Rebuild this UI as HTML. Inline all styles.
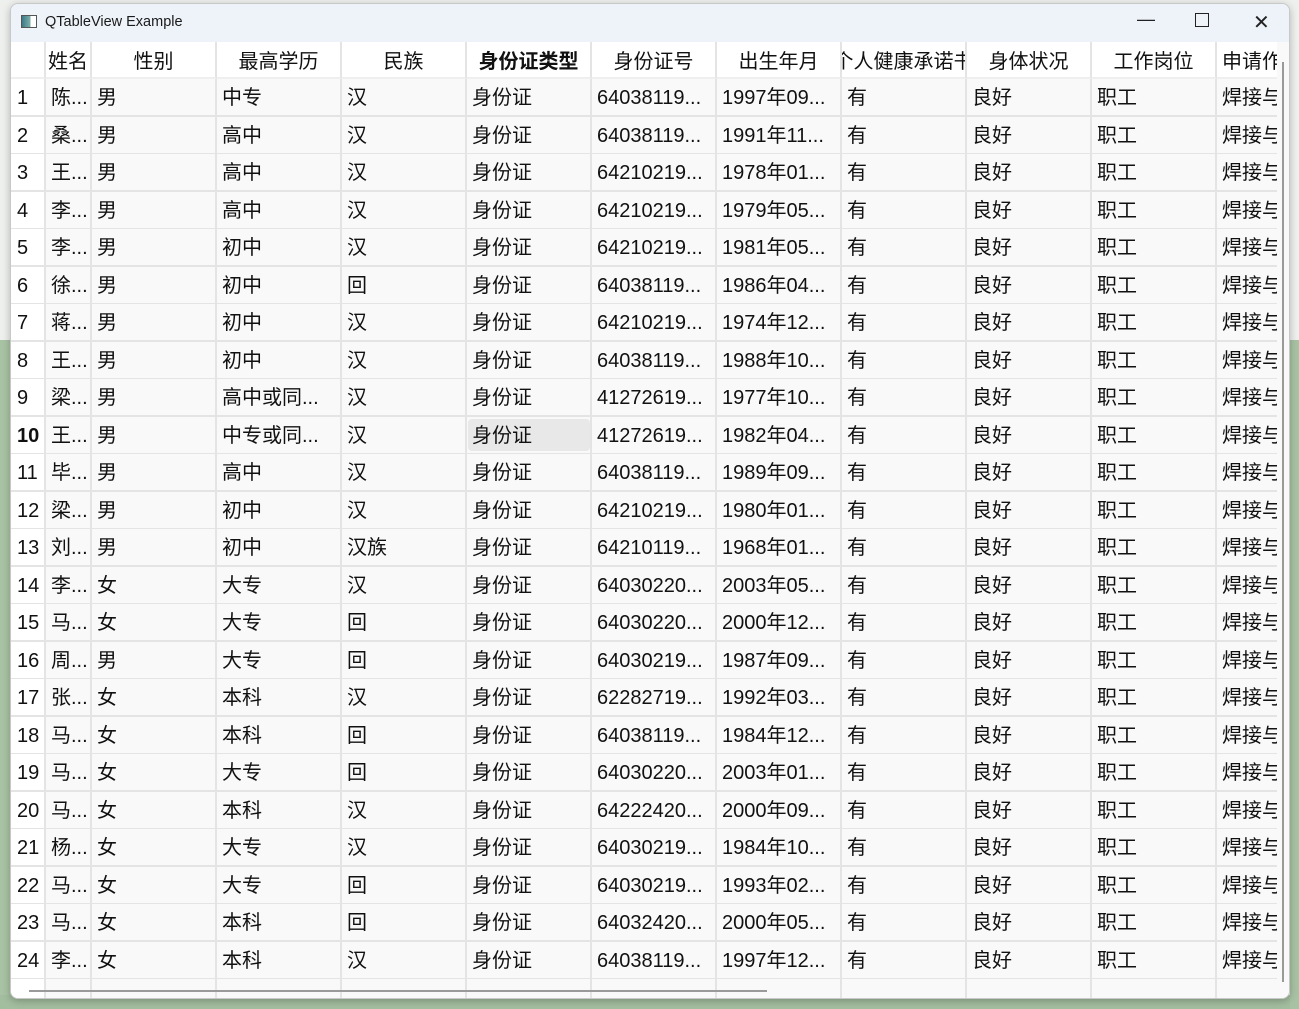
<!DOCTYPE html>
<html><head><meta charset="utf-8">
<style>
html,body{margin:0;padding:0;width:1299px;height:1009px;overflow:hidden;background:#eef0ee;font-family:"Liberation Sans","Noto Sans CJK SC",sans-serif;}
.bgl{position:absolute;left:0;top:340px;width:12px;height:669px;background:#a9c2a4;}
.bgb{position:absolute;left:0;top:995px;width:1299px;height:14px;background:#a3bd9f;}
.bgr{position:absolute;left:1290px;top:340px;width:9px;height:669px;background:#a9c2a4;}
.win{position:absolute;left:10px;top:3px;width:1280px;height:996px;background:#f9f9f9;border:1px solid #c8c8c8;border-radius:8px;overflow:hidden;box-shadow:0 2px 8px rgba(0,0,0,.25);box-sizing:border-box;}
.title{position:absolute;left:0;top:0;width:100%;height:38px;background:#eef3fa;font-size:14.5px;color:#1a1a1a;}
.title .t{position:absolute;left:34px;top:10px;}
.icon{position:absolute;left:10px;top:11px;width:16px;height:13px;border:1px solid #555;background:linear-gradient(90deg,#3b7a8a 0,#7fb0a8 60%,#fff 60%);box-sizing:border-box;}
.ctl{position:absolute;top:8px;font-size:18px;color:#222;}
.cell,.h{position:absolute;box-sizing:border-box;border-right:2px solid #e4e4e4;border-bottom:2px solid #e4e4e4;white-space:nowrap;overflow:hidden;font-size:20px;color:#111;line-height:35px;}
.cell{padding-left:5px;padding-top:2px;background:#f9f9f9;}
.h{background:#fff;display:flex;justify-content:center;border-bottom:2px solid #efefef;line-height:41px;}
.vh{position:absolute;box-sizing:border-box;border-right:2px solid #e4e4e4;border-bottom:2px solid #e4e4e4;font-size:20px;line-height:35px;padding-top:2px;padding-left:6px;background:#fff;color:#111;}
.sel{position:absolute;left:457px;top:415px;width:122px;height:32px;background:#e8e8e8;border-radius:4px;}
.hs{position:absolute;left:18px;top:986px;width:738px;height:2px;background:#9a9a9a;}
.vs{position:absolute;left:1271px;top:58px;width:2px;height:920px;background:#9a9a9a;}
.rcover{position:absolute;left:1266px;top:38px;width:14px;height:958px;background:#f9f9f9;}
</style></head><body>
<div class="bgl"></div><div class="bgb"></div><div class="bgr"></div>
<div class="win">
<div class="title"><div class="icon"></div><span class="t">QTableView Example</span>
<span class="ctl" style="left:1126px;top:5px">—</span>
<span class="ctl" style="left:1184px;top:9px;width:12px;height:12px;border:1.5px solid #222;"></span>
<span class="ctl" style="left:1242px;top:6px;font-size:20px">✕</span></div>
<div id="t"></div>
</div>
<script>
var cols=[[0,35],[35,46],[81,125],[206,125],[331,125],[456,125],[581,125],[706,125],[831,125],[956,125],[1081,125],[1206,62]];
var hd=["","姓名","性别","最高学历","民族","<b>身份证类型</b>","身份证号","出生年月","个人健康承诺书","身体状况","工作岗位","申请作业类别"];
var data=[
["陈","男","中专","汉","64038119","1997年09"],["桑","男","高中","汉","64038119","1991年11"],["王","男","高中","汉","64210219","1978年01"],["李","男","高中","汉","64210219","1979年05"],["李","男","初中","汉","64210219","1981年05"],["徐","男","初中","回","64038119","1986年04"],["蒋","男","初中","汉","64210219","1974年12"],["王","男","初中","汉","64038119","1988年10"],["梁","男","高中或同...","汉","41272619","1977年10"],["王","男","中专或同...","汉","41272619","1982年04"],["毕","男","高中","汉","64038119","1989年09"],["梁","男","初中","汉","64210219","1980年01"],["刘","男","初中","汉族","64210119","1968年01"],["李","女","大专","汉","64030220","2003年05"],["马","女","大专","回","64030220","2000年12"],["周","男","大专","回","64030219","1987年09"],["张","女","本科","汉","62282719","1992年03"],["马","女","本科","回","64038119","1984年12"],["马","女","大专","回","64030220","2003年01"],["马","女","本科","汉","64222420","2000年09"],["杨","女","大专","汉","64030219","1984年10"],["马","女","大专","回","64030219","1993年02"],["马","女","本科","回","64032420","2000年05"],["李","女","本科","汉","64038119","1997年12"]];
var h='';
for(var c=0;c<cols.length;c++){h+='<div class="h" style="left:'+cols[c][0]+'px;top:38px;width:'+cols[c][1]+'px;height:37px;'+(c==11?'justify-content:flex-start;padding-left:5px':'')+'">'+hd[c]+'</div>';}
h+='<div class="sel"></div>';
for(var r=0;r<25;r++){var y=75+r*37.5;
 var d=data[r];
 h+='<div class="vh" style="left:0;top:'+y+'px;width:35px;height:38px">'+(d?(r==9?'<b>10</b>':(r+1)):'')+'</div>';
 var vals=d?[d[0]+'...',d[1],d[2],d[3],'身份证',d[4]+'...',d[5]+'...','有','良好','职工','焊接与热切割作业']:['','','','','','','','','','',''];
 for(var c=1;c<cols.length;c++){h+='<div class="cell" style="left:'+cols[c][0]+'px;top:'+y+'px;width:'+cols[c][1]+'px;height:38px;'+(r==9&&c==5?'background:transparent':'')+'">'+vals[c-1]+'</div>';}
}
h+='<div class="rcover"></div><div class="vs"></div><div class="hs"></div>';
document.getElementById('t').innerHTML=h;
</script>
</body></html>
